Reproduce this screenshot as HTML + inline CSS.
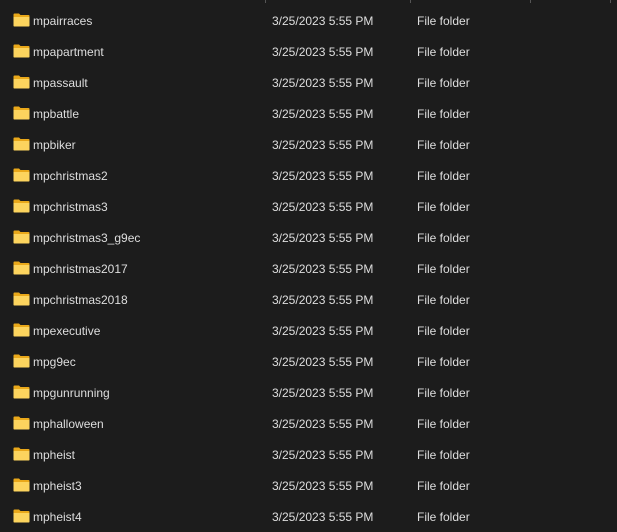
<!DOCTYPE html>
<html><head><style>
body{margin:0;width:617px;height:532px;background:#1c1c1c;overflow:hidden;font-family:"Liberation Sans",sans-serif;font-size:12px;color:#dedede;position:relative}
.r{position:absolute;left:0;width:617px;height:20px}
.r span{position:absolute;top:4px;white-space:nowrap}
.n{left:33px}.d{left:272px}.t{left:417px}
.r svg{position:absolute;left:13px;top:3px}
.tick{position:absolute;top:0;width:1px;height:3px;background:#555}
</style></head><body>
<div class="tick" style="left:265px"></div><div class="tick" style="left:410px"></div><div class="tick" style="left:530px"></div><div class="tick" style="left:610px"></div>
<script>
var names=["mpairraces","mpapartment","mpassault","mpbattle","mpbiker","mpchristmas2","mpchristmas3","mpchristmas3_g9ec","mpchristmas2017","mpchristmas2018","mpexecutive","mpg9ec","mpgunrunning","mphalloween","mpheist","mpheist3","mpheist4"];
var h="";
names.forEach(function(n,i){var y=10+i*31;
h+='<div class="r" style="top:'+y+'px"><svg width="17" height="14" viewBox="0 0 17 14"><path d="M0.5 1.5 Q0.5 0.5 1.5 0.5 H6 L7.5 2 H15.5 Q16.5 2 16.5 3 V12.5 Q16.5 13.5 15.5 13.5 H1.5 Q0.5 13.5 0.5 12.5Z" fill="#e9a81a"/><path d="M0.5 4 H16.5 V12.5 Q16.5 13.5 15.5 13.5 H1.5 Q0.5 13.5 0.5 12.5Z" fill="#fcd45e"/></svg><span class="n">'+n+'</span><span class="d">3/25/2023 5:55 PM</span><span class="t">File folder</span></div>';});
document.write(h);
</script>
</body></html>
